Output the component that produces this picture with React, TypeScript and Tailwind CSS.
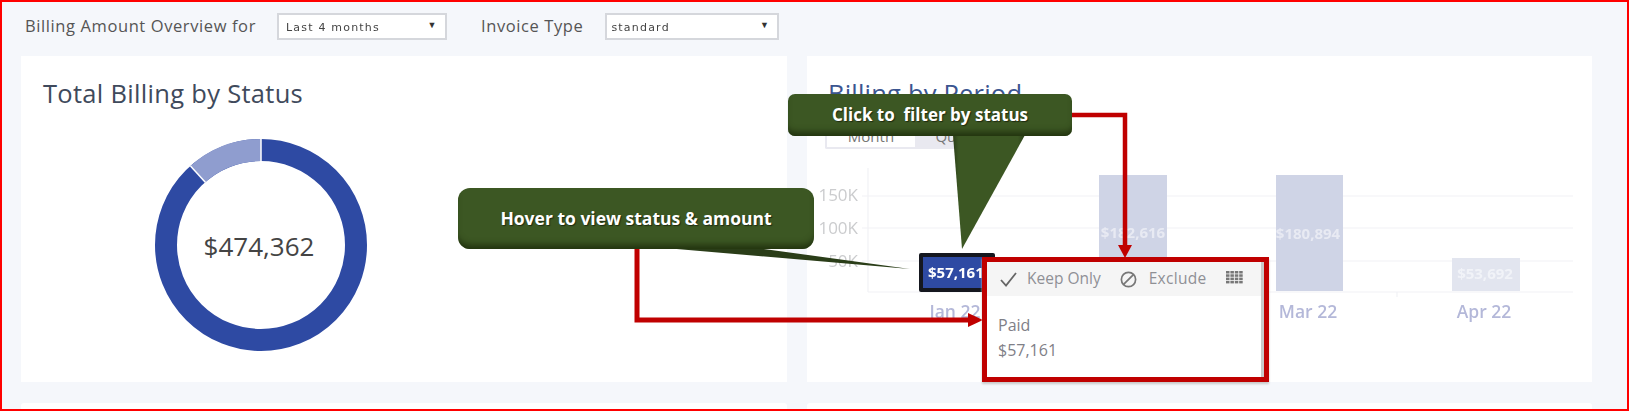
import React from "react";

const FONT = "font-['Open_Sans','Noto_Sans',sans-serif]";

const FilterSelect = ({ value, className }: { value: string; className: string }) => (
	<div
		className={`flex h-[27px] justify-between border-2 border-[#d5d7dc] bg-white pr-[8px] ${className}`}
	>
		<span className="pt-[5px] font-['DejaVu_Sans',sans-serif] text-[11px] tracking-[1.2px] text-[#444] blur-[0.3px]">{value}</span>
		<span className="pt-[5px] text-[9px] leading-none text-[#333]">▼</span>
	</div>
);

const Donut = () => (
	<div className="relative ml-[112px] mt-[30px] h-[212px] w-[212px]">
		<svg viewBox="0 0 212 212" className="h-full w-full">
			<circle cx="106" cy="106" r="95" fill="none" stroke="#2e4aa3" strokeWidth="22" />
			<path d="M 106 11 A 95 95 0 0 0 43 35" fill="none" stroke="#8f9dcf" strokeWidth="22" />
			<line x1="106" y1="0" x2="106" y2="22" stroke="#fff" strokeWidth="1.5" />
			<line x1="35.5" y1="27" x2="50.5" y2="43.5" stroke="#fff" strokeWidth="1.5" />
		</svg>
		<div className="absolute inset-0 flex items-center justify-center pr-[4px] pt-[3px] text-[26px] text-[#444]">
			$474,362
		</div>
	</div>
);

const PeriodChart = () => (
	<svg viewBox="807 160 785 165" className="mt-[11px] h-[165px] w-[785px]">
		<g stroke="#f1f2f5" strokeWidth="1.2">
			<line x1="868" y1="168" x2="868" y2="292" />
			<line x1="862" y1="196" x2="1573" y2="196" />
			<line x1="862" y1="228" x2="1573" y2="228" />
			<line x1="862" y1="261" x2="1573" y2="261" />
			<line x1="868" y1="292" x2="1573" y2="292" />
			<line x1="1397" y1="292" x2="1397" y2="297" />
		</g>
		<g fontSize="17" fill="#cbccce" textAnchor="end" className="blur-[0.4px]">
			<text x="858" y="201">150K</text>
			<text x="858" y="234">100K</text>
			<text x="858" y="267">50K</text>
		</g>
		<rect x="1099" y="175" width="68" height="116" fill="#cfd4e6" />
		<rect x="1276" y="175" width="67" height="116" fill="#cfd4e6" />
		<rect x="1452" y="258" width="68" height="33" fill="#e2e5ef" />
		<g fontSize="15" fontWeight="700" fill="#e8eaf3" textAnchor="middle" className="blur-[0.5px]">
			<text x="1133" y="238">$182,616</text>
			<text x="1308" y="239">$180,894</text>
			<text x="1485" y="279" fill="#f1f3f8">$53,692</text>
		</g>
		<rect x="919" y="253" width="76" height="39" rx="2" fill="#15171f" />
		<rect x="923" y="257" width="68" height="31" fill="#2e4aa3" />
		<text x="928" y="278" fontSize="15" fontWeight="700" fill="#fff" className="blur-[0.3px]">$57,161</text>
		<g fontSize="17.5" fontWeight="600" fill="#b4b8d9" textAnchor="middle" className="blur-[0.4px]">
			<text x="955" y="318">Jan 22</text>
			<text x="1308" y="318">Mar 22</text>
			<text x="1484" y="318">Apr 22</text>
		</g>
	</svg>
);

const Connectors = () => (
	<svg viewBox="0 0 1629 411" className="pointer-events-none absolute inset-0 h-[411px] w-[1629px]">
		<defs>
			<linearGradient id="pointerShade" x1="0" y1="0" x2="1" y2="0">
				<stop offset="0" stopColor="#2b3f19" />
				<stop offset="0.08" stopColor="#3c5723" />
				<stop offset="0.9" stopColor="#3c5723" />
				<stop offset="1" stopColor="#2b3f19" />
			</linearGradient>
		</defs>
		<path d="M 1070 115 H 1125 V 246" fill="none" stroke="#c00000" strokeWidth="4.5" />
		<polygon points="1118,245 1132,245 1125,258" fill="#c00000" />
		<path d="M 637 248 V 320 H 970" fill="none" stroke="#c00000" strokeWidth="5" />
		<polygon points="968,313 968,327 983,320" fill="#c00000" />
		<polygon points="953,135 1025,135 962,249" fill="url(#pointerShade)" />
		<polygon points="665,248 757,248 910,269" fill="#2a3d18" />
	</svg>
);

const Callout = ({ text, className }: { text: string; className: string }) => (
	<div
		className={`absolute flex items-center justify-center bg-[#3c5723] pb-[1px] font-['Open_Sans',sans-serif] font-bold text-white shadow-[inset_0_-7px_6px_-3px_#22330f] [text-shadow:1px_1px_1px_#1e2b10] ${className}`}
	>
		{text}
	</div>
);

const SelectionTooltip = () => (
	<div className="absolute left-[982px] top-[257px] h-[125px] w-[287px] border-[5px] border-[#c00000] bg-white text-[#8f9095] shadow-[0_2px_2px_#c8c8c8]">
		<div className="h-full border-r-[3px] border-[#c9c9c9]">
			<div className="flex h-[34px] items-center bg-[#f5f5f5] pl-[13px] text-[15.5px]">
				<svg viewBox="0 0 17 15" className="h-[15px] w-[17px]" fill="none" stroke="#666" strokeWidth="1.8">
					<path d="M 1 8 L 6 13.5 L 16 1" />
				</svg>
				<span className="ml-[10px]">Keep Only</span>
				<svg viewBox="0 0 16 16" className="ml-[19px] h-[17px] w-[17px]" fill="none" stroke="#777" strokeWidth="1.6">
					<circle cx="8" cy="8" r="6.7" />
					<line x1="3.4" y1="12.6" x2="12.6" y2="3.4" />
				</svg>
				<span className="ml-[12px] tracking-[0.3px]">Exclude</span>
				<svg viewBox="0 0 17 13" className="mb-[4px] ml-[19px] h-[13px] w-[17px]" fill="#777">
					{[0, 3.3, 6.6, 9.9].map((y) =>
						[0, 4.4, 8.8, 13.2].map((x) => <rect key={`${x}-${y}`} x={x} y={y} width="3.5" height="2.5" />),
					)}
				</svg>
			</div>
			<div className="pl-[11px] pt-[17px] text-[16px] leading-[25px] text-[#7f8087]">
				<div>Paid</div>
				<div>$57,161</div>
			</div>
		</div>
	</div>
);

export default function App() {
	return (
		<div className={`relative h-[411px] w-[1629px] overflow-hidden bg-[#f5f7fb] ${FONT}`}>
			<div className="flex h-[56px] items-start pl-[25px] pt-[13px] text-[16.5px] tracking-[0.6px] text-[#555]">
				<span className="leading-[26px]">Billing Amount Overview for</span>
				<FilterSelect value="Last 4 months" className="ml-[21px] w-[170px] pl-[7px]" />
				<span className="ml-[34px] leading-[26px]">Invoice Type</span>
				<FilterSelect value="standard" className="ml-[22px] w-[174px] border-[#bfc1c6] pl-[4px]" />
			</div>
			<div className="ml-[21px] grid w-[1571px] grid-cols-[766px_785px] gap-x-[20px] gap-y-[21px]">
				<div className="h-[326px] bg-white pl-[22px] pt-[21px]">
					<div className="text-[25.5px] leading-[32px] tracking-[0.3px] text-[#3f4a5c]">Total Billing by Status</div>
					<Donut />
				</div>
				<div className="h-[326px] bg-white pl-[21px] pt-[21px]">
					<div className="text-[25.5px] leading-[32px] tracking-[0.2px] text-[#3b5590]">Billing by Period</div>
					<div className="-ml-[3px] mt-[14px] flex h-[26px] w-[184px] rounded-[2px] bg-[#e9e9f0] text-[15px] text-[#777]">
						<div className="flex w-[92px] items-center justify-center rounded-[2px] border-2 border-[#e9e9f0] bg-white">
							Month
						</div>
						<div className="flex w-[92px] items-center justify-center">Quarter</div>
					</div>
					<div className="-ml-[21px]">
						<PeriodChart />
					</div>
				</div>
				<div className="h-[60px] rounded-t-[3px] bg-white" />
				<div className="h-[60px] rounded-t-[3px] bg-white" />
			</div>
			<Connectors />
			<Callout text="Click to  filter by status" className="left-[788px] top-[94px] h-[42px] w-[284px] whitespace-pre rounded-[7px] text-[17px]" />
			<Callout text="Hover to view status & amount" className="left-[458px] top-[188px] h-[61px] w-[356px] rounded-[12px] text-[17.5px]" />
			<SelectionTooltip />
			<div className="pointer-events-none absolute inset-0 border-2 border-[#ff0000]" />
		</div>
	);
}
